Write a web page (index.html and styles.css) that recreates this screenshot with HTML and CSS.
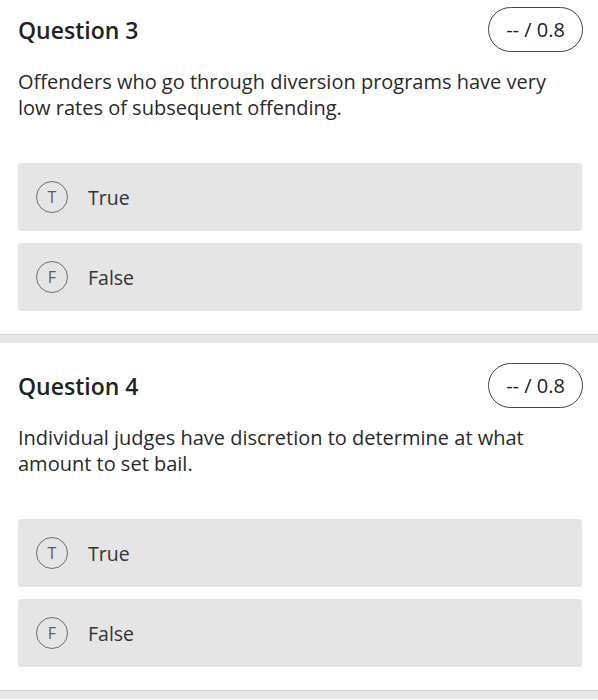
FILE: index.html
```html
<!DOCTYPE html>
<html>
<head>
<meta charset="utf-8">
<link rel="stylesheet" href="styles.css">
</head>
<body>
<section class="question first">
  <div class="q-head">
    <h2 class="q-title">Question 3</h2>
    <div class="score">-- / 0.8</div>
  </div>
  <p class="q-text">Offenders who go through diversion programs have very low rates of subsequent offending.</p>
  <div class="options">
    <div class="option"><span class="letter">T</span><span class="label">True</span></div>
    <div class="option"><span class="letter">F</span><span class="label">False</span></div>
  </div>
</section>
<div class="divider"></div>
<section class="question">
  <div class="q-head">
    <h2 class="q-title">Question 4</h2>
    <div class="score">-- / 0.8</div>
  </div>
  <p class="q-text">Individual judges have discretion to determine at what amount to set bail.</p>
  <div class="options">
    <div class="option"><span class="letter">T</span><span class="label">True</span></div>
    <div class="option"><span class="letter">F</span><span class="label">False</span></div>
  </div>
</section>
<div class="divider"></div>
</body>
</html>
```
FILE: styles.css
```css
* { box-sizing: border-box; }
html, body { margin: 0; padding: 0; background: #fff; }
body {
  font-family: "Open Sans", "Noto Sans", sans-serif;
  color: #222;
  width: 598px;
}
.question {
  padding: 20px 16px 23px 18px;
}
.question.first {
  padding-top: 7px;
  padding-bottom: 23px;
}
.q-head {
  display: flex;
  align-items: center;
  justify-content: space-between;
  height: 45px;
}
.q-title {
  margin: 0;
  font-size: 23px;
  font-weight: 600;
  color: #222;
}
.score {
  height: 45px;
  width: 95px;
  border: 1.5px solid #444;
  border-radius: 23px;
  display: flex;
  align-items: center;
  justify-content: center;
  font-size: 20px;
  color: #222;
  margin-right: -1px;
}
.q-text {
  margin: 17px 0 42px 0;
  font-size: 20px;
  line-height: 26px;
  color: #2a2a2a;
}
.options {
  display: flex;
  flex-direction: column;
  gap: 12px;
}
.option {
  height: 68px;
  background: #e5e5e5;
  border-radius: 3px;
  display: flex;
  align-items: center;
  padding-left: 18px;
}
.letter {
  width: 32px;
  height: 32px;
  border: 1.5px solid #6e6e6e;
  border-radius: 50%;
  display: flex;
  align-items: center;
  justify-content: center;
  font-size: 16px;
  color: #5a5a5a;
  margin-right: 20px;
}
.label {
  font-size: 19.5px;
  color: #333;
}
.divider {
  height: 9px;
  background: #e6e6e6;
  border-top: 1.5px solid #d4d4d4;
}
```
